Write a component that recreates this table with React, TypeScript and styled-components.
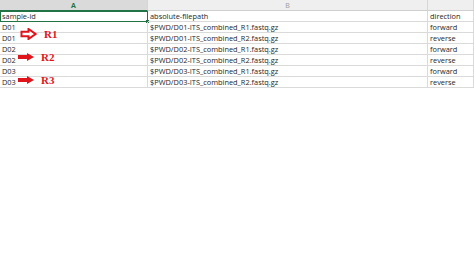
import styled, { createGlobalStyle } from "styled-components";

const GlobalStyle = createGlobalStyle`
  html, body {
    margin: 0;
    padding: 0;
    background: #ffffff;
  }
`;

const rows = [
  ["sample-id", "absolute-filepath", "direction"],
  ["D01", "$PWD/D01-ITS_combined_R1.fastq.gz", "forward"],
  ["D01", "$PWD/D01-ITS_combined_R2.fastq.gz", "reverse"],
  ["D02", "$PWD/D02-ITS_combined_R1.fastq.gz", "forward"],
  ["D02", "$PWD/D02-ITS_combined_R2.fastq.gz", "reverse"],
  ["D03", "$PWD/D03-ITS_combined_R1.fastq.gz", "forward"],
  ["D03", "$PWD/D03-ITS_combined_R2.fastq.gz", "reverse"],
];

const Sheet = styled.div`
  position: relative;
  width: 474px;
  height: 261px;
  overflow: hidden;
  font-family: "Open Sans", "Liberation Sans", sans-serif;
`;

const Grid = styled.div`
  display: grid;
  grid-template-columns: 148px 280px 1fr;
  grid-auto-rows: 11px;
`;

const ColHead = styled.div<{ $active?: boolean }>`
  box-sizing: border-box;
  display: flex;
  align-items: center;
  justify-content: center;
  font-size: 7px;
  background: ${(p) => (p.$active ? "#dadada" : "#efefef")};
  color: ${(p) => (p.$active ? "#217346" : "#9a9a9a")};
  font-weight: ${(p) => (p.$active ? 700 : 400)};
  border-right: 1px solid #d6d6d6;
  border-bottom: ${(p) => (p.$active ? "1px solid #217346" : "1px solid #cfcfcf")};
`;

const Cell = styled.div<{ $selected?: boolean }>`
  position: relative;
  box-sizing: border-box;
  padding-left: 2px;
  font-size: 7.4px;
  line-height: 10px;
  color: #262626;
  white-space: nowrap;
  border-right: 1px solid #dadada;
  border-bottom: 1px solid #dadada;
  ${(p) =>
    p.$selected &&
    `
    border: 1px solid #217346;
    padding-left: 1px;
    line-height: 9px;
  `}
`;

const Handle = styled.span`
  position: absolute;
  right: -2px;
  bottom: -2px;
  width: 3px;
  height: 3px;
  background: #217346;
`;

const Marker = styled.div<{ $top: number; $left: number }>`
  position: absolute;
  top: ${(p) => p.$top}px;
  left: ${(p) => p.$left}px;
  display: flex;
  align-items: center;
  gap: 7px;
`;

const Label = styled.span`
  font-family: "Liberation Serif", serif;
  font-weight: bold;
  font-size: 11px;
  color: #e0151b;
  line-height: 10px;
`;

function HollowArrow() {
  return (
    <svg width="17" height="12" viewBox="0 0 17 12">
      <path
        d="M1.5 3.8 H8.5 V1 L15.5 6 L8.5 11 V8.2 H1.5 Z"
        fill="#fff"
        stroke="#e0151b"
        strokeWidth="2"
      />
    </svg>
  );
}

function SolidArrow() {
  return (
    <svg width="16" height="8" viewBox="0 0 16 8">
      <path d="M0 2 H9 V0 L16 4 L9 8 V6 H0 Z" fill="#e0151b" />
    </svg>
  );
}

export default function App() {
  return (
    <Sheet>
      <GlobalStyle />
      <Grid>
        <ColHead $active>A</ColHead>
        <ColHead>B</ColHead>
        <ColHead />
        {rows.map((r, i) =>
          r.map((v, j) => (
            <Cell key={`${i}-${j}`} $selected={i === 0 && j === 0}>
              {v}
              {i === 0 && j === 0 && <Handle />}
            </Cell>
          ))
        )}
      </Grid>
      <Marker $top={28} $left={20}>
        <HollowArrow />
        <Label>R1</Label>
      </Marker>
      <Marker $top={52} $left={18}>
        <SolidArrow />
        <Label>R2</Label>
      </Marker>
      <Marker $top={75} $left={18}>
        <SolidArrow />
        <Label>R3</Label>
      </Marker>
    </Sheet>
  );
}
